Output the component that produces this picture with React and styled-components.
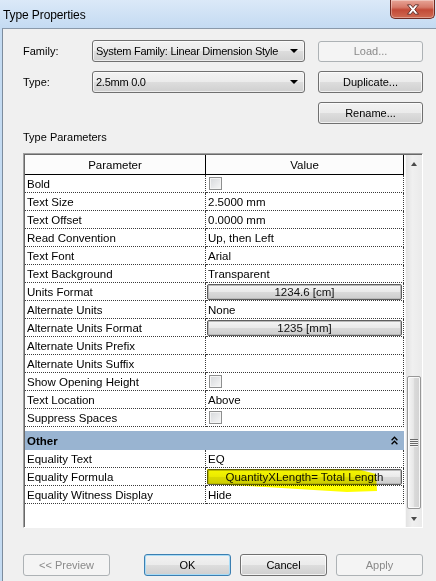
import React from 'react';
import styled, { createGlobalStyle, css } from 'styled-components';

const Global = createGlobalStyle`
  html, body { margin: 0; padding: 0; background: #f0f0f0; }
  body { font-family: "Liberation Sans", Arial, sans-serif; color: #000; }
  * { box-sizing: border-box; }
`;

const Window = styled.div`
  width: 436px;
  height: 581px;
  overflow: hidden;
  display: flex;
  flex-direction: column;
  background: #c4dbf2;
`;

const TitleBar = styled.div`
  height: 28px;
  flex: none;
  display: flex;
  align-items: flex-start;
  background: linear-gradient(#dbe9f8, #c4dbf2);
`;

const TitleText = styled.div`
  font-size: 12px;
  line-height: 28px;
  padding: 1px 0 0 3px;
  letter-spacing: -0.1px;
`;

const CloseButton = styled.div`
  margin-left: auto;
  margin-right: 1px;
  width: 45px;
  height: 19px;
  border: 1px solid #6e2a22;
  border-top: none;
  border-radius: 0 0 5px 5px;
  background: linear-gradient(#e8a597 0%, #d67a6a 40%, #c24a37 55%, #cf6b52 100%);
  box-shadow: inset 0 0 0 1px rgba(255, 255, 255, 0.35);
  display: flex;
  align-items: center;
  justify-content: center;
`;

const Frame = styled.div`
  flex: 1;
  display: flex;
  padding-left: 2px;
`;

const Body = styled.div`
  flex: 1;
  background: #f0f0f0;
  border-top: 1px solid #8a99aa;
  border-left: 1px solid #7d8c9d;
  padding: 11px 13px 0 20px;
  display: flex;
  flex-direction: column;
`;

const FormGrid = styled.div`
  display: grid;
  grid-template-columns: 69px 213px 1fr;
  grid-auto-rows: 22px;
  row-gap: 9px;
  font-size: 11px;
  align-items: center;
  justify-items: stretch;
`;

const Label = styled.div`
  font-size: 11px;
`;

const Select = styled.div`
  height: 22px;
  border: 1px solid #707070;
  border-radius: 3px;
  background: linear-gradient(#f2f2f2 0%, #ebebeb 50%, #dddddd 51%, #cfcfcf 100%);
  box-shadow: inset 0 0 0 1px rgba(255, 255, 255, 0.6);
  display: flex;
  align-items: center;
  padding: 0 5px 0 3px;
  font-size: 11px;
  letter-spacing: -0.25px;
  white-space: nowrap;
`;

const SelectText = styled.span`
  flex: 1;
`;

const Arrow = styled.span`
  width: 0;
  height: 0;
  border-left: 4px solid transparent;
  border-right: 4px solid transparent;
  border-top: 4px solid #000;
  margin-right: 1px;
`;

const buttonBase = css`
  height: ${(p) => p.$h || 22}px;
  border-radius: 3px;
  display: flex;
  align-items: center;
  justify-content: center;
  font-size: 11px;
  font-family: "Liberation Sans", Arial, sans-serif;
`;

const Button = styled.div`
  ${buttonBase};
  width: ${(p) => (p.$w ? `${p.$w}px` : 'auto')};
  justify-self: end;
  border: 1px solid ${(p) => (p.$default ? '#3c7fb1' : p.$disabled ? '#adb2b5' : '#707070')};
  color: ${(p) => (p.$disabled ? '#8a8a8a' : '#000')};
  background: ${(p) =>
    p.$disabled
      ? '#f4f4f4'
      : 'linear-gradient(#f2f2f2 0%, #ebebeb 50%, #dddddd 51%, #cfcfcf 100%)'};
  box-shadow: ${(p) =>
    p.$default
      ? 'inset 0 0 0 1px #a8dcf7'
      : p.$disabled
      ? 'none'
      : 'inset 0 0 0 1px rgba(255,255,255,0.7)'};
`;

const SectionLabel = styled.div`
  font-size: 11px;
  line-height: 13px;
  margin-top: 7px;
`;

const GridFrame = styled.div`
  margin-top: 9px;
  height: 375px;
  border: 1px solid;
  border-color: #a0a0a0 #ffffff #ffffff #a0a0a0;
  box-shadow: inset 1px 1px 0 #696969;
  padding: 1px 0 0 1px;
  display: flex;
  background: #fff;
`;

const Table = styled.div`
  width: 380px;
  display: flex;
  flex-direction: column;
  background: #fff;
  font-size: 11.5px;
`;

const HeaderRow = styled.div`
  display: grid;
  grid-template-columns: 181px 198px;
  height: 20px;
`;

const HeaderCell = styled.div`
  background: #fcfcfc;
  border-right: 1px solid #000;
  border-bottom: 1px solid #000;
  display: flex;
  align-items: center;
  justify-content: center;
  padding-top: 1px;
`;

const Row = styled.div`
  display: grid;
  grid-template-columns: 181px 198px;
  height: 18px;
`;

const Cell = styled.div`
  position: relative;
  border-bottom: 1px dotted #3a3a3a;
  border-right: 1px dotted #3a3a3a;
  display: flex;
  align-items: center;
  padding-left: ${(p) => (p.$pad === false ? 0 : 2)}px;
  white-space: nowrap;
`;

const GroupHeader = styled.div`
  margin-top: 4px;
  height: 19px;
  width: 379px;
  background: #99b4d1;
  font-weight: bold;
  display: flex;
  align-items: center;
  justify-content: space-between;
  padding: 0 6px 0 2px;
`;

const CheckBox = styled.span`
  width: 13px;
  height: 13px;
  margin-left: 1px;
  border: 1px solid #8e8f8f;
  background: linear-gradient(135deg, #d6d8db, #f7f7f7);
  box-shadow: inset 0 0 0 1px #f4f4f4;
`;

const ValueButton = styled.div`
  flex: 1;
  height: 16px;
  margin: 0 1px 0 1px;
  border: 1px solid #5e5e5e;
  border-radius: 2px;
  box-shadow: inset 0 0 0 1px #b9b9b9;
  background: linear-gradient(#f5f5f5 0%, #e9e9e9 50%, #dadada 51%, #cdcdcd 100%);
  display: flex;
  align-items: center;
  justify-content: center;
  padding-top: 1px;
  color: #111;
`;

const Highlight = styled.svg`
  position: absolute;
  left: 1px;
  top: 1px;
  z-index: 2;
  pointer-events: none;
  mix-blend-mode: multiply;
  overflow: visible;
`;

const Scrollbar = styled.div`
  width: 17px;
  display: flex;
  flex-direction: column;
  background: linear-gradient(90deg, #e3e3e3, #f0f0f0 40%, #eaeaea);
  border-left: 1px solid #f8f8f8;
`;

const ScrollArrow = styled.div`
  height: 17px;
  flex: none;
  display: flex;
  align-items: center;
  justify-content: center;
`;

const Tri = styled.span`
  width: 0;
  height: 0;
  border-left: 3.5px solid transparent;
  border-right: 3.5px solid transparent;
  ${(p) =>
    p.$up
      ? 'border-bottom: 4px solid #4a4a4a;'
      : 'border-top: 4px solid #4a4a4a;'}
`;

const Track = styled.div`
  flex: 1;
  display: flex;
  flex-direction: column;
  justify-content: flex-end;
  padding: 0 1px 1px 1px;
`;

const Thumb = styled.div`
  height: 133px;
  border: 1px solid #979797;
  border-radius: 2px;
  background: linear-gradient(90deg, #f6f6f6, #e8e8e8 45%, #d9d9d9 55%, #d2d2d2);
  box-shadow: inset 0 0 0 1px rgba(255, 255, 255, 0.8);
  display: flex;
  align-items: center;
  justify-content: center;
`;

const Grip = styled.span`
  width: 8px;
  height: 8px;
  background: repeating-linear-gradient(#6a6a6a 0 1px, #f2f2f2 1px 2px);
`;

const Footer = styled.div`
  margin-top: 26px;
  display: flex;
  gap: 9px;
`;

const Spacer = styled.div`
  flex: 1;
`;

const params = [
  ['Bold', { check: true }],
  ['Text Size', '2.5000 mm'],
  ['Text Offset', '0.0000 mm'],
  ['Read Convention', 'Up, then Left'],
  ['Text Font', 'Arial'],
  ['Text Background', 'Transparent'],
  ['Units Format', { button: '1234.6 [cm]' }],
  ['Alternate Units', 'None'],
  ['Alternate Units Format', { button: '1235 [mm]' }],
  ['Alternate Units Prefix', ''],
  ['Alternate Units Suffix', ''],
  ['Show Opening Height', { check: true }],
  ['Text Location', 'Above'],
  ['Suppress Spaces', { check: true }],
];

const other = [
  ['Equality Text', 'EQ'],
  ['Equality Formula', { button: 'QuantityXLength= Total Length', highlight: true }],
  ['Equality Witness Display', 'Hide'],
];

function Value({ v }) {
  if (typeof v === 'string') return <Cell>{v}</Cell>;
  if (v.check)
    return (
      <Cell>
        <CheckBox />
      </Cell>
    );
  return (
    <Cell $pad={false}>
      <ValueButton>{v.button}</ValueButton>
      {v.highlight && (
        <Highlight width="172" height="24" viewBox="0 0 172 24">
          <polygon
            points="0,0 150,0 169,5 170,22 140,23 115,21.5 58,18 0,15"
            fill="#ffff00"
          />
        </Highlight>
      )}
    </Cell>
  );
}

function ParamRow({ name, v }) {
  return (
    <Row>
      <Cell>{name}</Cell>
      <Value v={v} />
    </Row>
  );
}

export default function App() {
  return (
    <>
      <Global />
      <Window>
        <TitleBar>
          <TitleText>Type Properties</TitleText>
          <CloseButton>
            <svg width="14" height="11" viewBox="0 0 14 11">
              <path
                d="M1.5 0.8 L4.8 0.8 L7 3.6 L9.2 0.8 L12.5 0.8 L8.8 5.5 L12.5 10.2 L9.2 10.2 L7 7.4 L4.8 10.2 L1.5 10.2 L5.2 5.5 Z"
                fill="#fff"
                stroke="#5a2620"
                strokeWidth="0.9"
                strokeLinejoin="round"
              />
            </svg>
          </CloseButton>
        </TitleBar>
        <Frame>
          <Body>
            <FormGrid>
              <Label>Family:</Label>
              <Select>
                <SelectText>System Family: Linear Dimension Style</SelectText>
                <Arrow />
              </Select>
              <Button $disabled $h={21} $w={105}>Load...</Button>
              <Label>Type:</Label>
              <Select>
                <SelectText>2.5mm 0.0</SelectText>
                <Arrow />
              </Select>
              <Button $w={105}>Duplicate...</Button>
              <span />
              <span />
              <Button $w={105}>Rename...</Button>
            </FormGrid>
            <SectionLabel>Type Parameters</SectionLabel>
            <GridFrame>
              <Table>
                <HeaderRow>
                  <HeaderCell>Parameter</HeaderCell>
                  <HeaderCell>Value</HeaderCell>
                </HeaderRow>
                {params.map(([n, v]) => (
                  <ParamRow key={n} name={n} v={v} />
                ))}
                <GroupHeader>
                  <span>Other</span>
                  <svg width="7" height="9" viewBox="0 0 7 9">
                    <path d="M0.6 4.2 L3.5 1.2 L6.4 4.2 M0.6 8.2 L3.5 5.2 L6.4 8.2" fill="none" stroke="#000" strokeWidth="1.3" />
                  </svg>
                </GroupHeader>
                {other.map(([n, v]) => (
                  <ParamRow key={n} name={n} v={v} />
                ))}
              </Table>
              <Scrollbar>
                <ScrollArrow>
                  <Tri $up />
                </ScrollArrow>
                <Track>
                  <Thumb>
                    <Grip />
                  </Thumb>
                </Track>
                <ScrollArrow>
                  <Tri />
                </ScrollArrow>
              </Scrollbar>
            </GridFrame>
            <Footer>
              <Button $disabled $w={87}>&lt;&lt; Preview</Button>
              <Spacer />
              <Button $default $w={87}>OK</Button>
              <Button $w={87}>Cancel</Button>
              <Button $disabled $w={87}>Apply</Button>
            </Footer>
          </Body>
        </Frame>
      </Window>
    </>
  );
}
